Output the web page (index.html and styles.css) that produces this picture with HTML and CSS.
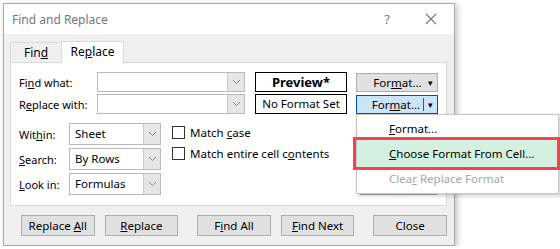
FILE: index.html
```html
<!DOCTYPE html>
<html lang="en">
  <head>
    <meta charset="UTF-8" />
    <title>Find and Replace</title>
    <link rel="stylesheet" href="styles.css">
  </head>
  <body>
    <div class="dialog">
      <div class="titlebar">
        <span class="title">Find and Replace</span>
        <span class="help">?</span>
        <svg class="close" width="12" height="12" viewBox="0 0 12 12">
          <path d="M1 1 L11 11 M11 1 L1 11" stroke="#777" stroke-width="1.1" fill="none" />
        </svg>
      </div>
      <div class="body">
        <div class="tabs">
          <div class="tab">Fin<u>d</u></div>
          <div class="tab active">Re<u>p</u>lace</div>
        </div>
        <div class="panel">
          <div class="row">
            <label class="label">Fi<u>n</u>d what:</label>
            <div class="combo"><span class="combo-text"></span><span class="arrow"><svg width="9" height="6" viewBox="0 0 9 6"><path d="M1 1 L4.5 4.5 L8 1" stroke="#888" fill="none" /></svg></span></div>
            <div class="preview bold">Preview*</div>
            <button class="format"><span class="fmt-text">For<u>m</u>at...</span><span class="caret">&#9662;</span></button>
          </div>
          <div class="row">
            <label class="label">R<u>e</u>place with:</label>
            <div class="combo"><span class="combo-text"></span><span class="arrow"><svg width="9" height="6" viewBox="0 0 9 6"><path d="M1 1 L4.5 4.5 L8 1" stroke="#888" fill="none" /></svg></span></div>
            <div class="preview">No Format Set</div>
            <button class="format hot"><span class="fmt-text">For<u>m</u>at...</span><span class="split"></span><span class="caret">&#9662;</span></button>
          </div>

          <div class="options">
            <div class="selects">
              <div class="sel-row">
                <label class="sel-label">Wit<u>h</u>in:</label>
                <div class="select"><span class="combo-text">Sheet</span><span class="arrow"><svg width="9" height="6" viewBox="0 0 9 6"><path d="M1 1 L4.5 4.5 L8 1" stroke="#888" fill="none" /></svg></span></div>
              </div>
              <div class="sel-row">
                <label class="sel-label"><u>S</u>earch:</label>
                <div class="select"><span class="combo-text">By Rows</span><span class="arrow"><svg width="9" height="6" viewBox="0 0 9 6"><path d="M1 1 L4.5 4.5 L8 1" stroke="#888" fill="none" /></svg></span></div>
              </div>
              <div class="sel-row">
                <label class="sel-label"><u>L</u>ook in:</label>
                <div class="select"><span class="combo-text">Formulas</span><span class="arrow"><svg width="9" height="6" viewBox="0 0 9 6"><path d="M1 1 L4.5 4.5 L8 1" stroke="#888" fill="none" /></svg></span></div>
              </div>
            </div>
            <div class="checks">
              <div class="check"><span class="box"></span><span>Match <u>c</u>ase</span></div>
              <div class="check"><span class="box"></span><span>Match entire cell c<u>o</u>ntents</span></div>
            </div>
            <div class="spacer"></div>
            <!-- options button sits under the open menu, only its edge shows -->
            <button class="btn options-btn"></button>
          </div>
        </div>

        <div class="actions">
          <button class="btn">Replace <u>A</u>ll</button>
          <button class="btn"><u>R</u>eplace</button>
          <button class="btn wide-gap">F<u>i</u>nd All</button>
          <button class="btn"><u>F</u>ind Next</button>
          <button class="btn wide-gap">Close</button>
        </div>
      </div>
    </div>

    <!-- dropdown of the second Format button -->
    <div class="menu">
      <div class="item first"><u>F</u>ormat...</div>
      <div class="item picked"><u>C</u>hoose Format From Cell...</div>
      <div class="item disabled">Clea<u>r</u> Replace Format</div>
    </div>
  </body>
</html>
```

FILE: styles.css
```css
/* Basic styling */
body {
  margin: 0;
  padding: 0;
  background-color: #fff;
  font-family: "Noto Sans", "Open Sans", sans-serif;
  font-size: 11px;
  color: #000;
}
u {
  text-underline-offset: 1px;
}
.dialog {
  margin: 3px 0 0 3px;
  width: 450px;
  height: 241px;
  border: 1px solid #a9a9a9;
  box-shadow: 2px 2px 6px rgba(0, 0, 0, 0.25);
  background-color: #f0f0f0;
  display: flex;
  flex-direction: column;
}
.titlebar {
  height: 30px;
  background-color: #fff;
  display: flex;
  align-items: center;
  padding-left: 8px;
  color: #777;
  font-size: 12px;
}
.title {
  flex: 1;
}
.help {
  font-size: 13px;
  margin-right: 35px;
}
.close {
  margin-right: 17px;
}
.body {
  flex: 1;
  padding: 7px 7px 0 6px;
}
.tabs {
  display: flex;
  align-items: flex-end;
  height: 21px;
}
.tab {
  width: 50px;
  height: 19px;
  line-height: 19px;
  text-align: center;
  border: 1px solid #d9d9d9;
  border-bottom: none;
  background-color: #f0f0f0;
  font-size: 12px;
}
.tab.active {
  width: 61px;
  height: 21px;
  line-height: 19px;
  background-color: #fff;
  border-left: none;
  position: relative;
  top: 1px;
}
.panel {
  height: 133px;
  background-color: #fff;
  border: 1px solid #d9d9d9;
  padding: 9px 7px 0 8px;
}
.row {
  display: flex;
  align-items: center;
  height: 20px;
  margin-bottom: 2px;
}
.label {
  width: 78px;
}
.combo,
.select {
  box-sizing: border-box;
  height: 20px;
  border: 1px solid #b9b9b9;
  display: flex;
  background-color: #fff;
}
.combo {
  width: 148px;
}
.combo-text {
  flex: 1;
  padding-left: 5px;
  line-height: 18px;
}
.arrow {
  width: 16px;
  border-left: 1px solid #c9c9c9;
  background-color: #e6e6e6;
  display: flex;
  align-items: center;
  justify-content: center;
}
.preview {
  box-sizing: border-box;
  width: 92px;
  height: 20px;
  margin-left: 10px;
  border: 1px solid #000;
  text-align: center;
  line-height: 18px;
  font-size: 11.5px;
}
.preview.bold {
  font-weight: bold;
  font-size: 13px;
}
.format {
  box-sizing: border-box;
  width: 82px;
  height: 19px;
  margin-left: 9px;
  border: 1px solid #adadad;
  background-color: #e1e1e1;
  font-family: inherit;
  font-size: 11.5px;
  display: flex;
  align-items: center;
  padding: 0 3px 0 0;
}
.format.hot {
  background-color: #cce4f7;
  border-color: #005499;
}
.fmt-text {
  flex: 1;
  text-align: center;
  padding-left: 12px;
}
.split {
  width: 1px;
  height: 13px;
  background-color: #555;
  margin-right: 2px;
}
.caret {
  font-size: 9px;
  width: 8px;
}
.options {
  display: flex;
  margin-top: 9px;
}
.selects {
  display: flex;
  flex-direction: column;
  gap: 3px;
}
.sel-row {
  display: flex;
  align-items: center;
}
.sel-label {
  width: 50px;
}
.select {
  width: 92px;
  height: 22px;
}
.select .combo-text {
  line-height: 20px;
  font-size: 11.5px;
}
.checks {
  margin-left: 11px;
  padding-top: 2px;
  display: flex;
  flex-direction: column;
  gap: 6px;
}
.check {
  display: flex;
  align-items: center;
  gap: 5px;
  font-size: 11.5px;
}
.box {
  box-sizing: border-box;
  width: 13px;
  height: 13px;
  border: 1px solid #333;
  background-color: #fff;
}
.spacer {
  flex: 1;
}
.btn {
  box-sizing: border-box;
  width: 75px;
  height: 21px;
  border: 1px solid #adadad;
  background-color: #e1e1e1;
  font-family: inherit;
  font-size: 11.5px;
  padding: 0;
  color: #000;
}
.options-btn {
  align-self: flex-end;
  margin-right: 1px;
  width: 78px;
}
.actions {
  display: flex;
  padding: 9px 0 0 11px;
  gap: 10px;
}
.actions .wide-gap {
  margin-left: 9px;
}
.menu {
  position: absolute;
  left: 356px;
  top: 114px;
  width: 201px;
  height: 77px;
  background-color: #fff;
  border: 1px solid #c6c6c6;
  box-shadow: 2px 2px 4px rgba(0, 0, 0, 0.2);
  font-size: 11.5px;
  padding-top: 1px;
}
.item {
  height: 24px;
  line-height: 24px;
  padding-left: 32px;
  position: relative;
}
.item.first {
  height: 23px;
  line-height: 25px;
}
.item.picked {
  margin-top: 1px;
  height: 27px;
  line-height: 27px;
  background-color: #d3f0e0;
}
.item.picked::after {
  content: "";
  position: absolute;
  left: -4px;
  top: -3px;
  right: -2px;
  bottom: -3px;
  border: 3px solid #f5424b;
}
.item.disabled {
  color: #a6a6a6;
}
```
